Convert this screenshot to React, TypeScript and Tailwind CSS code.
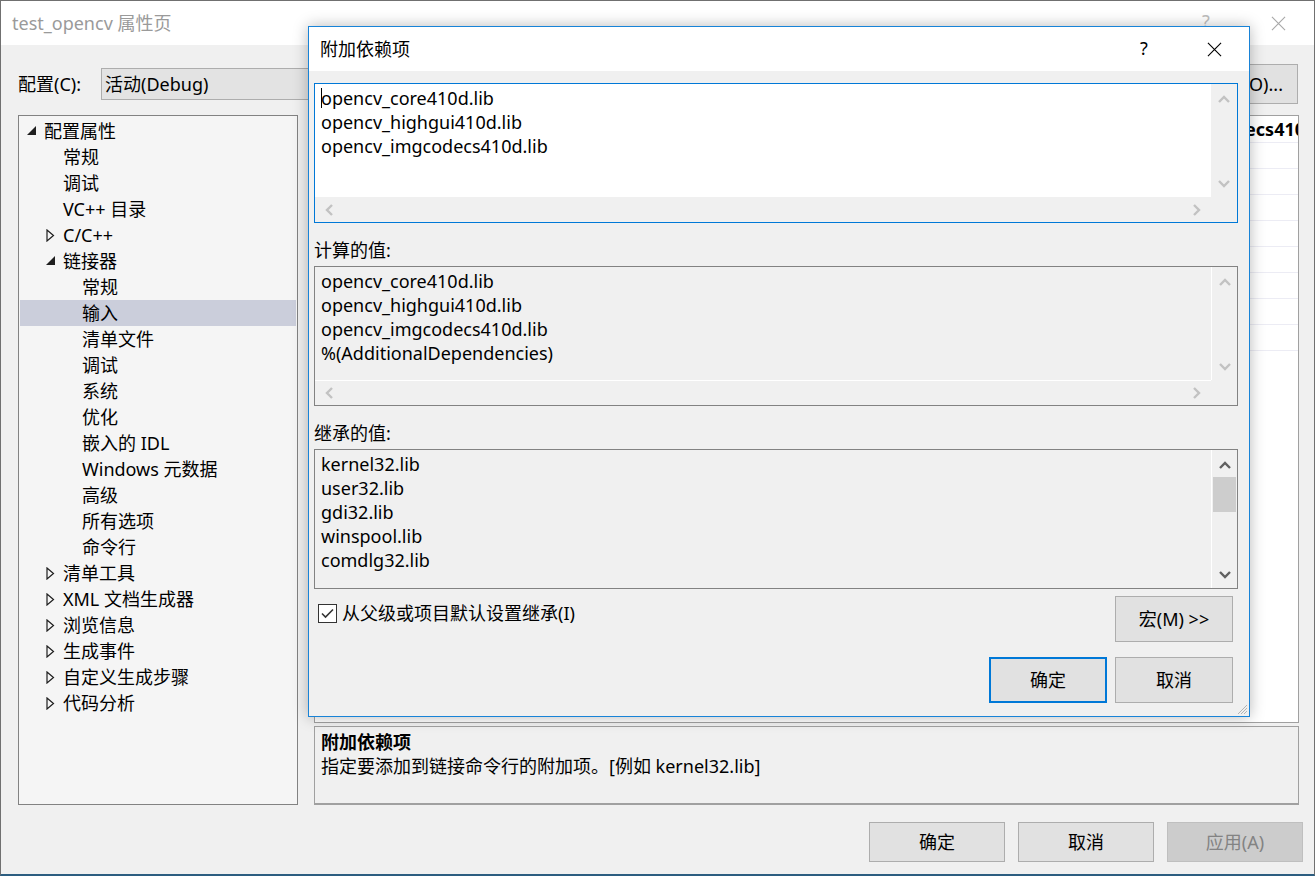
import React from "react";

const FONT = "font-['Noto_Sans','Noto_Sans_CJK_SC',sans-serif]";

type Dir = "up" | "down" | "left" | "right";

function Chevron({ dir, color = "#c2c2c2" }: { dir: Dir; color?: string }) {
  const pts = {
    up: "1,8 6,3 11,8",
    down: "1,4 6,9 11,4",
    left: "8,1 3,6 8,11",
    right: "4,1 9,6 4,11",
  }[dir];
  return (
    <svg width="12" height="12" viewBox="0 0 12 12">
      <polyline points={pts} fill="none" stroke={color} strokeWidth="2.4" />
    </svg>
  );
}

function CloseGlyph({ color, size }: { color: string; size: number }) {
  return (
    <svg width={size} height={size} viewBox="0 0 16 16">
      <path d="M1 1 L15 15 M15 1 L1 15" stroke={color} strokeWidth="1.2" fill="none" />
    </svg>
  );
}

function VScroll({ readonly, enabled, thumb }: { readonly?: boolean; enabled?: boolean; thumb?: boolean }) {
  const c = enabled ? "#606060" : "#c2c2c2";
  return (
    <div className={`w-[26px] flex flex-col bg-[#f0f0f0] ${readonly ? "border-l border-white" : ""}`}>
      <div className="h-[27px] flex items-center justify-center pt-[4px]">
        <Chevron dir="up" color={c} />
      </div>
      {thumb && <div className="h-[35px] mx-[1px] bg-[#cdcdcd]" />}
      <div className="flex-1" />
      <div className="h-[27px] flex items-center justify-center pb-[2px]">
        <Chevron dir="down" color={c} />
      </div>
    </div>
  );
}

function TextBox({
  lines,
  editable,
  hscroll,
  thumb,
}: {
  lines: string[];
  editable?: boolean;
  hscroll?: boolean;
  thumb?: boolean;
}) {
  return (
    <div
      className={`h-[140px] shrink-0 flex flex-col border ${
        editable ? "border-[#0078d7]" : "border-[#828282]"
      }`}
    >
      <div className="flex-1 flex min-h-0">
        <div className={`flex-1 pl-[6px] pt-[2px] leading-[24px] ${editable ? "bg-white" : "bg-[#f0f0f0]"}`}>
          {lines.map((l, i) => (
            <div key={i} className="flex items-center whitespace-nowrap">
              {editable && i === 0 && <span className="w-[1px] h-[20px] bg-black -mr-[1px]" />}
              {l}
            </div>
          ))}
        </div>
        <VScroll readonly={!editable} enabled={thumb} thumb={thumb} />
      </div>
      {hscroll && (
        <div className="h-[25px] flex bg-[#f0f0f0]">
          <div
            className={`flex-1 flex items-center justify-between pl-[9px] pr-[9px] ${
              editable ? "" : "border-t border-white"
            }`}
          >
            <Chevron dir="left" />
            <Chevron dir="right" />
          </div>
          <div className="w-[26px]" />
        </div>
      )}
    </div>
  );
}

function ExpandedArrow() {
  return (
    <svg width="10" height="10" viewBox="0 0 10 10">
      <polygon points="9,0 9,9 0,9" fill="#1e1e1e" />
    </svg>
  );
}

function CollapsedArrow() {
  return (
    <svg width="9" height="13" viewBox="0 0 9 13">
      <polygon points="1,1 7.5,6.5 1,12" fill="none" stroke="#1e1e1e" strokeWidth="1.2" />
    </svg>
  );
}

const tree: { t: string; lv: number; a?: "open" | "closed"; sel?: boolean }[] = [
  { t: "配置属性", lv: 0, a: "open" },
  { t: "常规", lv: 1 },
  { t: "调试", lv: 1 },
  { t: "VC++ 目录", lv: 1 },
  { t: "C/C++", lv: 1, a: "closed" },
  { t: "链接器", lv: 1, a: "open" },
  { t: "常规", lv: 2 },
  { t: "输入", lv: 2, sel: true },
  { t: "清单文件", lv: 2 },
  { t: "调试", lv: 2 },
  { t: "系统", lv: 2 },
  { t: "优化", lv: 2 },
  { t: "嵌入的 IDL", lv: 2 },
  { t: "Windows 元数据", lv: 2 },
  { t: "高级", lv: 2 },
  { t: "所有选项", lv: 2 },
  { t: "命令行", lv: 2 },
  { t: "清单工具", lv: 1, a: "closed" },
  { t: "XML 文档生成器", lv: 1, a: "closed" },
  { t: "浏览信息", lv: 1, a: "closed" },
  { t: "生成事件", lv: 1, a: "closed" },
  { t: "自定义生成步骤", lv: 1, a: "closed" },
  { t: "代码分析", lv: 1, a: "closed" },
];

// property grid rows; only the right end of the first value shows past the dialog
const rows = [
  "opencv_core410d.lib;opencv_highgui410d.lib;opencv_imgcodecs410d.lib;%(AdditionalDependencies)",
  "",
  "",
  "",
  "",
  "",
  "",
  "",
  "",
];

export default function App() {
  return (
    <div className={`relative w-[1315px] h-[876px] overflow-hidden bg-[#f0f0f0] text-[18px] text-black ${FONT}`}>
      {/* property pages window */}
      <div className="h-full flex flex-col border-x border-t border-[#707070] border-b-2 border-b-[#2c5d80]">
        <div className="h-[44px] shrink-0 bg-white flex items-center pl-[11px]">
          <span className="text-[#9a9a9a]">test_opencv 属性页</span>
          <div className="ml-auto flex h-full">
            <div className="w-[72px] flex items-center justify-center text-[#bdbdbd] pb-[4px]">?</div>
            <div className="w-[72px] flex items-center justify-center">
              <CloseGlyph color="#a8a8a8" size={15} />
            </div>
          </div>
        </div>

        <div className="mt-[19px] h-[40px] shrink-0 flex items-center pl-[17px] pr-[16px]">
          <span className="w-[83px] shrink-0">配置(C):</span>
          <div className="w-[600px] h-[32px] bg-[#e3e3e3] border border-[#adadad] flex items-center pl-[3px]">
            活动(Debug)
          </div>
          <div className="ml-auto w-[160px] h-[40px] bg-[#e1e1e1] border border-[#adadad] flex items-center justify-end pr-[14px]">
            配置管理器(O)...
          </div>
        </div>

        <div className="mt-[11px] h-[690px] shrink-0 flex gap-[16px] pl-[17px] pr-[15px]">
          <div className="w-[280px] shrink-0 border border-[#828282] bg-[#f5f5f5] pt-[2px] px-[1px]">
            {tree.map((it, i) => (
              <div
                key={i}
                className={`h-[26px] flex items-center whitespace-nowrap ${it.sel ? "bg-[#cbcedb]" : ""}`}
                style={{ paddingLeft: 7 + 19 * it.lv }}
              >
                <span className="w-[17px] flex items-center">
                  {it.a === "open" && <ExpandedArrow />}
                  {it.a === "closed" && <CollapsedArrow />}
                </span>
                <span>{it.t}</span>
              </div>
            ))}
          </div>

          <div className="flex-1 min-w-0 flex flex-col gap-[3px]">
            <div className="h-[608px] border border-[#a0a0a0] bg-white pt-[1px] overflow-hidden">
              {rows.map((v, i) => (
                <div key={i} className="h-[26px] flex border-b border-[#ececf4] whitespace-nowrap">
                  <div className="w-[387px] shrink-0" />
                  <div className="flex-1 min-w-0 overflow-hidden flex items-center pl-[4px] font-bold">{v}</div>
                </div>
              ))}
            </div>
            <div className="h-[79px] border border-[#a0a0a0] border-b-2 pl-[6px] pt-[3px] leading-[24px]">
              <div className="font-bold">附加依赖项</div>
              <div>指定要添加到链接命令行的附加项。[例如 kernel32.lib]</div>
            </div>
          </div>
        </div>

        <div className="mt-[17px] flex justify-end gap-[13px] pr-[11px]">
          <div className="w-[136px] h-[40px] bg-[#e1e1e1] border border-[#adadad] flex items-center justify-center">确定</div>
          <div className="w-[136px] h-[40px] bg-[#e1e1e1] border border-[#adadad] flex items-center justify-center">取消</div>
          <div className="w-[136px] h-[40px] bg-[#cccccc] border border-[#bfbfbf] flex items-center justify-center text-[#838383]">
            应用(A)
          </div>
        </div>
      </div>

      {/* 附加依赖项 dialog, floating over the window */}
      <div className="absolute left-[308px] top-[26px] w-[942px] h-[691px] border border-[#1883d7] bg-[#f0f0f0] shadow-[0_0_14px_rgba(0,0,0,0.28)] flex flex-col">
        <div className="h-[44px] shrink-0 bg-white flex items-center pl-[11px]">
          <span>附加依赖项</span>
          <div className="ml-auto flex h-full">
            <div className="w-[70px] flex items-center justify-center pb-[2px]">?</div>
            <div className="w-[70px] flex items-center justify-center">
              <CloseGlyph color="#000" size={15} />
            </div>
          </div>
        </div>

        <div className="flex-1 flex flex-col pl-[5px] pr-[11px] pt-[12px]">
          <TextBox editable hscroll lines={["opencv_core410d.lib", "opencv_highgui410d.lib", "opencv_imgcodecs410d.lib"]} />
          <div className="mt-[15px] mb-[4px] leading-[24px]">计算的值:</div>
          <TextBox
            hscroll
            lines={["opencv_core410d.lib", "opencv_highgui410d.lib", "opencv_imgcodecs410d.lib", "%(AdditionalDependencies)"]}
          />
          <div className="mt-[15px] mb-[4px] leading-[24px]">继承的值:</div>
          <TextBox thumb lines={["kernel32.lib", "user32.lib", "gdi32.lib", "winspool.lib", "comdlg32.lib"]} />

          <div className="mt-[7px] flex items-start">
            <div className="mt-[5px] ml-[4px] flex items-center gap-[5px] leading-[24px]">
              <span className="w-[19px] h-[19px] border border-[#333] bg-white flex items-center justify-center">
                <svg width="15" height="15" viewBox="0 0 15 15">
                  <polyline points="2,7.5 5.5,11 13,3.5" fill="none" stroke="#333" strokeWidth="1.6" />
                </svg>
              </span>
              <span>从父级或项目默认设置继承(I)</span>
            </div>
            <div className="ml-auto mr-[5px] w-[118px] h-[46px] bg-[#e1e1e1] border border-[#adadad] flex items-center justify-center">
              宏(M) &gt;&gt;
            </div>
          </div>

          <div className="mt-[15px] flex justify-end gap-[8px] pr-[5px]">
            <div className="w-[118px] h-[46px] bg-[#e1e1e1] border-2 border-[#0078d7] flex items-center justify-center">确定</div>
            <div className="w-[118px] h-[46px] bg-[#e1e1e1] border border-[#adadad] flex items-center justify-center">取消</div>
          </div>
        </div>

        <svg className="absolute right-[1px] bottom-[1px]" width="12" height="12" viewBox="0 0 12 12">
          <path d="M11 2 L2 11 M11 5 L5 11 M11 8 L8 11" stroke="#b4b4b4" strokeWidth="1" />
        </svg>
      </div>
    </div>
  );
}
